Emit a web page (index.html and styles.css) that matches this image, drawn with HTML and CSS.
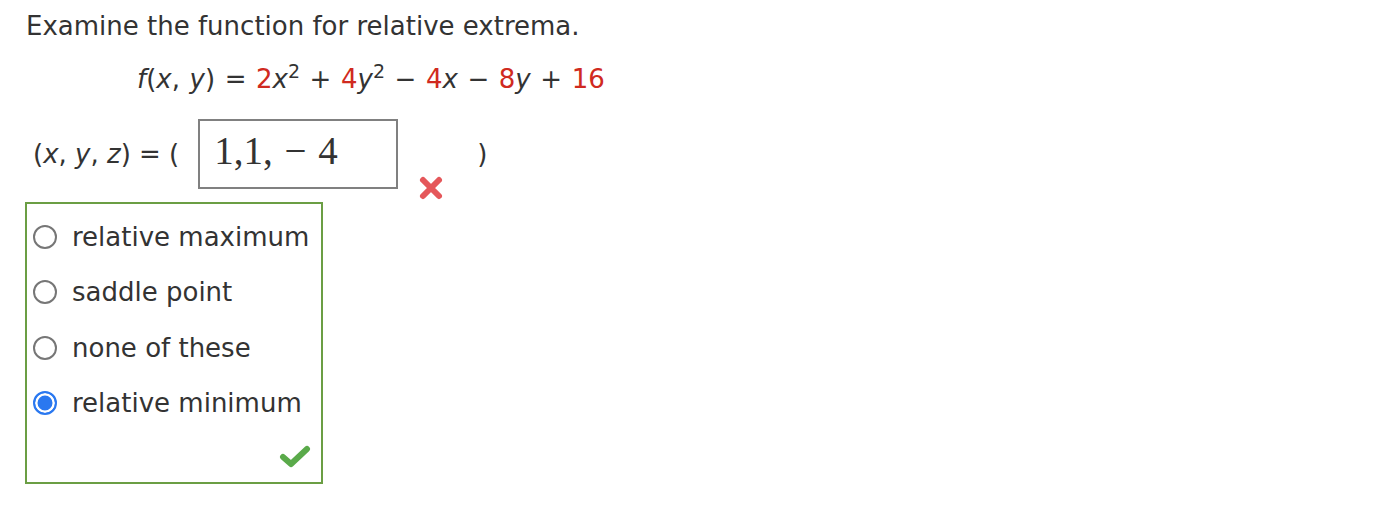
FILE: index.html
```html
<!DOCTYPE html>
<html>
<head>
<meta charset="utf-8">
<link rel="stylesheet" href="styles.css">
</head>
<body>
<div class="page">
  <p class="prompt">Examine the function for relative extrema.</p>
  <p class="formula"><i>f</i>(<i>x</i>, <i>y</i>) = <span class="red">2</span><i>x</i><sup>2</sup> + <span class="red">4</span><i>y</i><sup>2</sup> − <span class="red">4</span><i>x</i> − <span class="red">8</span><i>y</i> + <span class="red">16</span></p>
  <div class="answer-row">
    <span class="lhs">(<i>x</i>, <i>y</i>, <i>z</i>) = (</span>
    <span class="input">1,1, − 4</span>
    <span class="xmark"><svg width="26" height="26" viewBox="0 0 26 26"><path d="M5 5 L21 21 M21 5 L5 21" stroke="#e5575a" stroke-width="6" stroke-linecap="round" fill="none"/></svg></span>
    <span class="rparen">)</span>
  </div>
  <div class="choices">
    <label class="choice"><span class="radio"></span>relative maximum</label>
    <label class="choice"><span class="radio"></span>saddle point</label>
    <label class="choice"><span class="radio"></span>none of these</label>
    <label class="choice"><span class="radio checked"></span>relative minimum</label>
    <div class="check-row"><svg width="32" height="24" viewBox="0 0 32 24"><path d="M4 13 L12 20 L28 5" stroke="#5aaa4a" stroke-width="6" stroke-linecap="round" stroke-linejoin="round" fill="none"/></svg></div>
  </div>
</div>
</body>
</html>
```
FILE: styles.css
```css
html, body {
  margin: 0;
  padding: 0;
  background: #fff;
}
.page {
  padding: 7px 0 0 26px;
  font-family: "DejaVu Sans", Verdana, sans-serif;
  font-size: 26px;
  color: #333;
}
.prompt {
  margin: 0;
  line-height: 38px;
}
.formula {
  margin: 16px 0 0 111px;
  line-height: 36px;
  word-spacing: 1.3px;
}
.formula sup {
  font-size: 19px;
  line-height: 0;
  vertical-align: 10px;
}
.red {
  color: #d02a20;
}
.answer-row {
  display: flex;
  align-items: center;
  margin-top: 22px;
  margin-left: 7px;
  height: 70px;
}
.lhs {
  white-space: pre;
}
.input {
  box-sizing: border-box;
  width: 200px;
  height: 70px;
  border: 2px solid #808080;
  margin-left: 19px;
  padding: 6px 0 0 14px;
  font-family: "Liberation Serif", "Times New Roman", serif;
  font-size: 39px;
  word-spacing: 2px;
  color: #333;
  line-height: 48px;
}
.xmark {
  align-self: flex-end;
  margin: 0 0 -12px 20px;
  display: flex;
}
.rparen {
  margin-left: 33px;
}
.choices {
  box-sizing: border-box;
  width: 298px;
  height: 282px;
  margin: 13px 0 0 -1px;
  border: 2px solid #6b9e44;
  padding-top: 5px;
}
.choice {
  display: flex;
  align-items: center;
  height: 55.5px;
  padding-left: 6px;
}
.radio {
  box-sizing: border-box;
  width: 24px;
  height: 24px;
  border-radius: 50%;
  border: 2px solid #767676;
  margin-right: 15px;
  background: #fff;
}
.radio.checked {
  border: 2.5px solid #2a78f0;
  background: #2a78f0;
  box-shadow: inset 0 0 0 2.5px #fff;
}
.check-row {
  display: flex;
  justify-content: flex-end;
  padding: 13px 10px 0 0;
}
```
